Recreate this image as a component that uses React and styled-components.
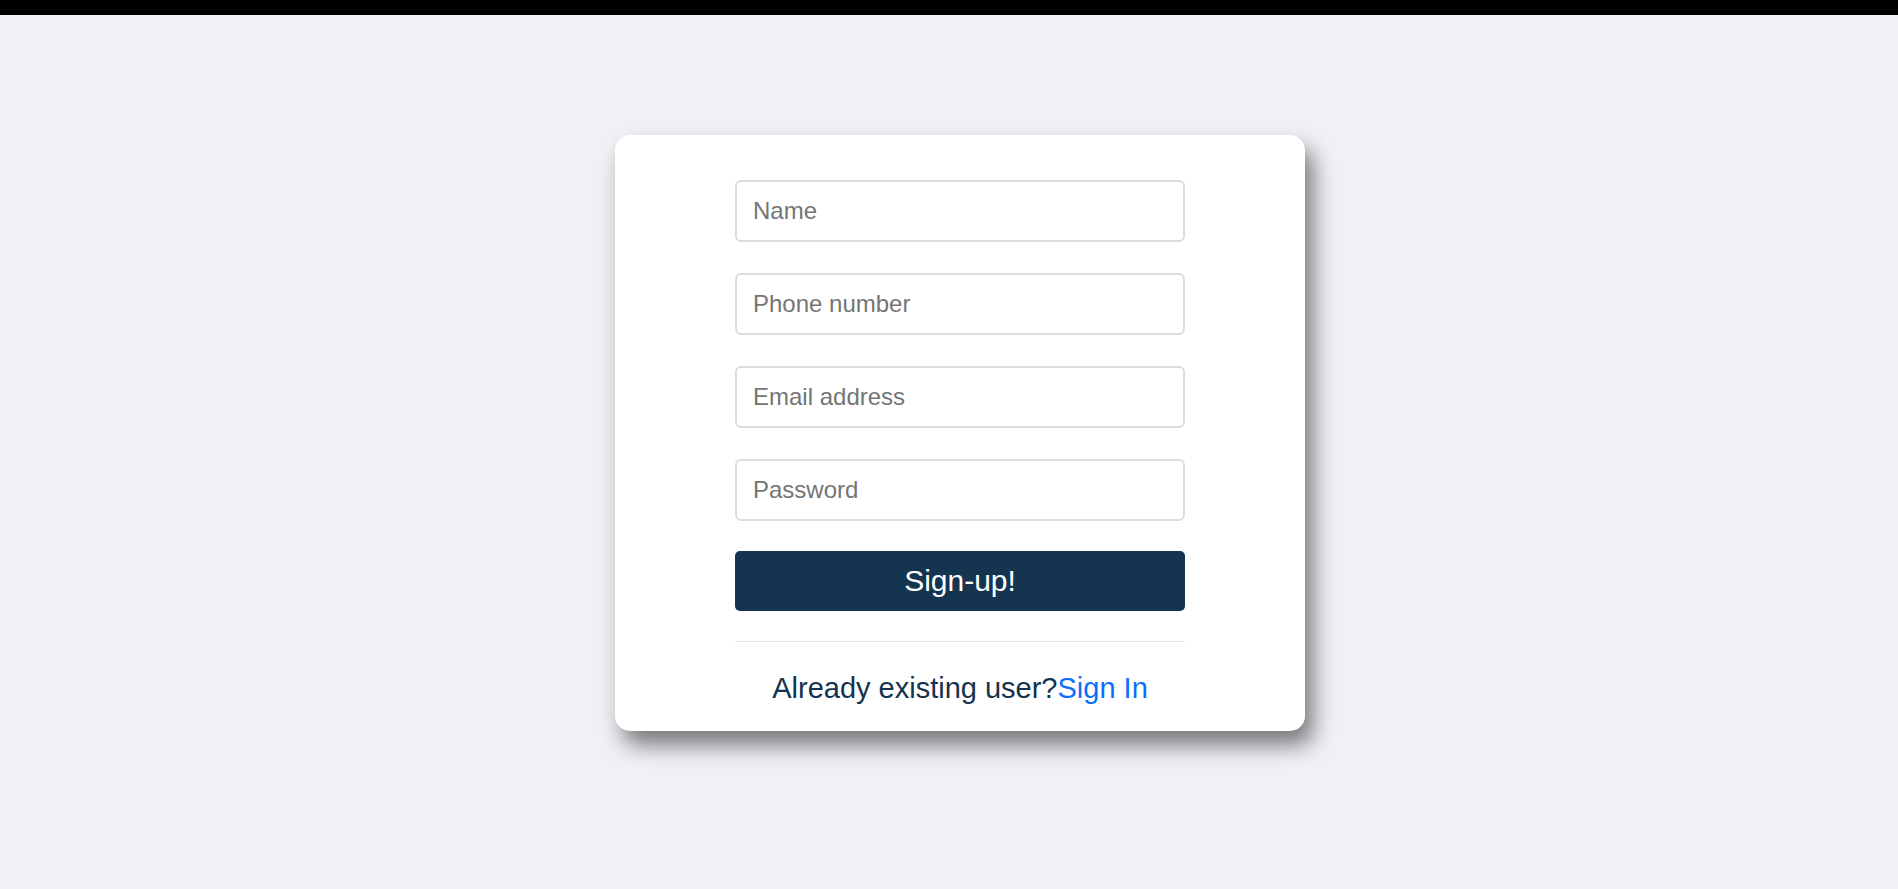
import React from "react";
import styled, { createGlobalStyle } from "styled-components";

const GlobalStyle = createGlobalStyle`
  html, body {
    margin: 0;
    padding: 0;
    background: #f0f1f5;
    font-family: "Liberation Sans", Arial, sans-serif;
  }
  * { box-sizing: border-box; }
`;

const Page = styled.div`
  min-height: 889px;
  display: flex;
  flex-direction: column;
`;

const TopBar = styled.div`
  height: 15px;
  background: #000;
`;

const Main = styled.main`
  display: flex;
  justify-content: center;
  padding: 120px 0 0 22px;
`;

const Card = styled.div`
  width: 690px;
  background: #fff;
  border-radius: 15px;
  box-shadow: 8px 14px 22px rgba(0, 0, 0, 0.5);
  padding: 45px 120px 26px;
  display: flex;
  flex-direction: column;
`;

const Form = styled.form`
  display: flex;
  flex-direction: column;
  gap: 31px;
`;

const Input = styled.input`
  width: 100%;
  height: 62px;
  border: 2px solid #dcdde1;
  border-radius: 6px;
  padding: 0 16px;
  font-family: "Liberation Sans", Arial, sans-serif;
  font-size: 24px;
  color: #222;
  outline: none;
  background: #fff;
  &::placeholder {
    color: #757575;
  }
`;

const Button = styled.button`
  margin-top: -1px;
  height: 60px;
  width: 100%;
  border: none;
  border-radius: 5px;
  background: #14344f;
  color: #fff;
  font-family: "Liberation Sans", Arial, sans-serif;
  font-size: 30px;
  cursor: pointer;
`;

const Divider = styled.hr`
  margin: 30px 0 0;
  border: none;
  border-top: 1px solid #e3e3e3;
  height: 0;
`;

const Footer = styled.p`
  margin: 30px 0 0;
  text-align: center;
  font-size: 29px;
  color: #14334e;
  line-height: 33px;
`;

const Link = styled.a`
  color: #0d6efd;
  text-decoration: none;
`;

export default function App() {
  return (
    <>
      <GlobalStyle />
      <Page>
        <TopBar />
        <Main>
          <Card>
            <Form onSubmit={(e) => e.preventDefault()}>
              <Input type="text" placeholder="Name" />
              <Input type="tel" placeholder="Phone number" />
              <Input type="email" placeholder="Email address" />
              <Input type="password" placeholder="Password" />
              <Button type="submit">Sign-up!</Button>
            </Form>
            <Divider />
            <Footer>
              Already existing user?<Link href="#">Sign In</Link>
            </Footer>
          </Card>
        </Main>
      </Page>
    </>
  );
}
